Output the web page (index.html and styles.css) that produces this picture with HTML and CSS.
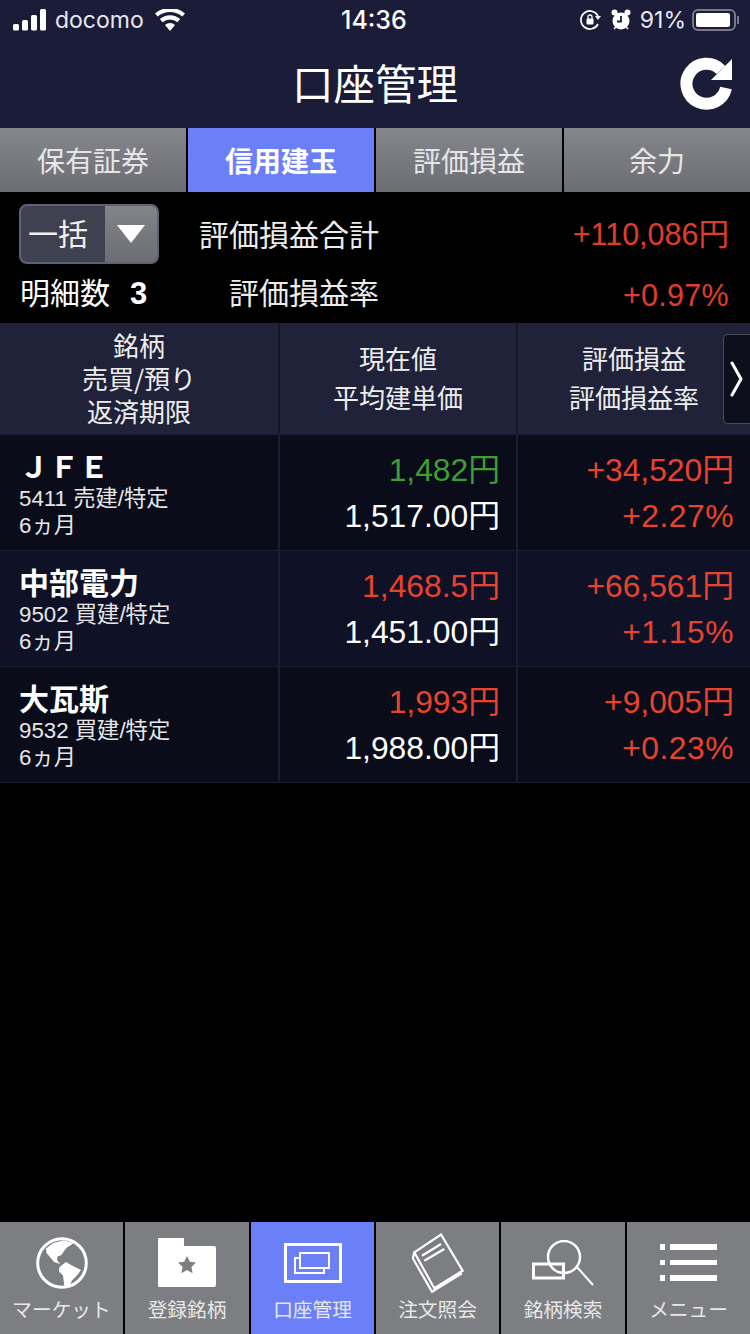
FILE: index.html
```html
<!DOCTYPE html>
<html lang="ja">
<head>
    <meta charset="UTF-8">
    <meta name="viewport" content="width=device-width, initial-scale=1.0">
    <title>口座管理</title>
    <link rel="stylesheet" href="styles.css">
</head>
<body>
    <header class="top-area">
        <div class="status-bar">
            <div class="status-left">
                <svg class="signal" width="34" height="22" viewBox="0 0 34 22"><rect x="0" y="15" width="6" height="6.500" rx="1.500"/><rect x="9" y="11" width="6" height="10.500" rx="1.500"/><rect x="18" y="6" width="6" height="15.500" rx="1.500"/><rect x="27" y="0" width="6" height="21.500" rx="1.500"/></svg>
                <span class="carrier">docomo</span>
                <svg class="wifi" width="30" height="22" viewBox="0 0 30 22"><path d="M15 22l-5-6a7.500 7.500 0 0 1 10 0z"/><path d="M7.600 13.300l-2.800-3.300a15.500 15.500 0 0 1 20.400 0l-2.800 3.300a11 11 0 0 0-14.800 0z"/><path d="M2.700 7.500L0 4.500a23 23 0 0 1 30 0l-2.700 3a19 19 0 0 0-24.600 0z"/></svg>
            </div>
            <div class="status-time">14:36</div>
            <div class="status-right">
                <svg width="22" height="22" viewBox="0 0 22 22" fill="none"><path d="M18 15a9 9 0 1 1 0-8" stroke="#fff" stroke-width="1.700"/><path d="M15 7h6l-3 4z" fill="#fff"/><rect x="6.500" y="9.500" width="7" height="6" rx="1" fill="#fff"/><path d="M8 10V8a2 2 0 0 1 4 0v2" stroke="#fff" stroke-width="1.300"/></svg>
                <svg width="20" height="22" viewBox="0 0 20 22"><circle cx="10" cy="12" r="8.500" fill="#fff"/><path d="M10 7v5.500H6" fill="none" stroke="#1a1c38" stroke-width="1.800"/><circle cx="3.500" cy="3.500" r="3" fill="#fff"/><circle cx="16.500" cy="3.500" r="3" fill="#fff"/><path d="M3 20l2-2M17 20l-2-2" stroke="#fff" stroke-width="1.500"/></svg>
                <span class="battery-pct">91%</span>
                <div class="battery"><div class="battery-fill"></div></div>
                <div class="battery-tip"></div>
            </div>
        </div>
        <div class="title-bar">
            <h1>口座管理</h1>
            <svg class="reload" width="54" height="54" viewBox="0 0 54 54"><path d="M47 31A20 20 0 1 1 42 13" fill="none" stroke="#fff" stroke-width="12"/><path d="M53 2V23H32z" fill="#fff"/></svg>
        </div>
    </header>

    <nav class="tabs">
        <div class="tab">保有証券</div>
        <div class="tab tab-active">信用建玉</div>
        <div class="tab">評価損益</div>
        <div class="tab">余力</div>
    </nav>

    <section class="summary">
        <div class="summary-row summary-row-top">
            <div class="selector">
                <span class="selector-label">一括</span>
                <span class="selector-arrow"><span class="triangle"></span></span>
            </div>
            <span class="summary-name">評価損益合計</span>
            <span class="summary-value">+110,086円</span>
        </div>
        <div class="summary-row summary-row-bottom">
            <span class="detail-count">明細数<b>3</b></span>
            <span class="summary-name">評価損益率</span>
            <span class="summary-value">+0.97%</span>
        </div>
    </section>

    <section class="table">
        <div class="table-head">
            <div class="head-cell">銘柄<br>売買/預り<br>返済期限</div>
            <div class="head-cell head-cell-two">現在値<br>平均建単価</div>
            <div class="head-cell head-cell-two">評価損益<br>評価損益率</div>
        </div>
        <div class="more-tab">
            <svg width="14" height="36" viewBox="0 0 14 36"><path d="M2 2l9 16-9 16" fill="none" stroke="#fff" stroke-width="3" stroke-linecap="round" stroke-linejoin="round"/></svg>
        </div>

        <div class="stock-row">
            <div class="stock-cell">
                <div class="stock-name">ＪＦＥ</div>
                <div class="stock-sub">5411 売建/特定</div>
                <div class="stock-sub">6ヵ月</div>
            </div>
            <div class="num-cell">
                <div class="num-top green">1,482円</div>
                <div class="num-bottom">1,517.00円</div>
            </div>
            <div class="num-cell">
                <div class="num-top red">+34,520円</div>
                <div class="num-bottom red">+2.27%</div>
            </div>
        </div>
        <div class="stock-row stock-row-alt">
            <div class="stock-cell">
                <div class="stock-name">中部電力</div>
                <div class="stock-sub">9502 買建/特定</div>
                <div class="stock-sub">6ヵ月</div>
            </div>
            <div class="num-cell">
                <div class="num-top red">1,468.5円</div>
                <div class="num-bottom">1,451.00円</div>
            </div>
            <div class="num-cell">
                <div class="num-top red">+66,561円</div>
                <div class="num-bottom red">+1.15%</div>
            </div>
        </div>
        <div class="stock-row">
            <div class="stock-cell">
                <div class="stock-name">大瓦斯</div>
                <div class="stock-sub">9532 買建/特定</div>
                <div class="stock-sub">6ヵ月</div>
            </div>
            <div class="num-cell">
                <div class="num-top red">1,993円</div>
                <div class="num-bottom">1,988.00円</div>
            </div>
            <div class="num-cell">
                <div class="num-top red">+9,005円</div>
                <div class="num-bottom red">+0.23%</div>
            </div>
        </div>
    </section>

    <footer class="bottom-nav">
        <div class="nav-item">
            <div class="nav-icon">
                <svg width="52" height="52" viewBox="0 0 52 52"><circle cx="26" cy="26" r="24.300" fill="none" stroke="#fff" stroke-width="3"/><path d="M10 11.500L17 6 27.300 3.500 38 6 31 10.500 28 14 25.500 18 21.500 19.500 21 23 24 27 18 25 13.500 19.500 10.500 16z" fill="#fff"/><path d="M23.500 30L30 25 36 28.500 45 33 41 38.500 36 43.500 33 50.500 28.500 50.500 27 38.500 23 34.500z" fill="#fff"/></svg>
            </div>
            <span>マーケット</span>
        </div>
        <div class="nav-item">
            <div class="nav-icon">
                <svg width="58" height="49" viewBox="0 0 58 49"><path d="M0 1a1 1 0 0 1 1-1h25v8h30a2 2 0 0 1 2 2v37a2 2 0 0 1-2 2H1a1 1 0 0 1-1-1z" fill="#fff"/><path d="M29 18l2.800 5.800 6.200.8-4.600 4.300 1.200 6.300-5.600-3.100-5.600 3.100 1.200-6.300-4.600-4.300 6.200-.8z" fill="#7c7e82"/></svg>
            </div>
            <span>登録銘柄</span>
        </div>
        <div class="nav-item nav-item-active">
            <div class="nav-icon">
                <svg width="58" height="40" viewBox="0 0 58 40" fill="none" stroke="#fff" stroke-width="2"><rect x="1.500" y="1.500" width="55" height="37" stroke-width="3"/><rect x="11" y="15" width="29" height="15"/><rect x="16" y="10" width="29" height="15" fill="#6b80f8"/></svg>
            </div>
            <span>口座管理</span>
        </div>
        <div class="nav-item">
            <div class="nav-icon">
                <svg width="52" height="60" viewBox="0 0 52 60" fill="none" stroke="#fff" stroke-width="2.200"><path d="M2.300 19.300L29 1.500 50.700 37.700 22.300 55.300z"/><path d="M2.300 19.300L0.800 25.300 20 58.800 49 41 47.500 38.500"/><path d="M10 22.700L29 11M12.300 27.700L32.300 16"/></svg>
            </div>
            <span>注文照会</span>
        </div>
        <div class="nav-item">
            <div class="nav-icon">
                <svg width="62" height="46" viewBox="0 0 62 46" fill="none" stroke="#fff"><circle cx="32" cy="17" r="16" stroke-width="2.500"/><rect x="1.500" y="24" width="30" height="14" stroke-width="3"/><path d="M45 27l16 18" stroke-width="2"/></svg>
            </div>
            <span>銘柄検索</span>
        </div>
        <div class="nav-item">
            <div class="nav-icon">
                <svg width="57" height="37" viewBox="0 0 57 37" fill="#fff"><rect x="0" y="0" width="5" height="6"/><rect x="10" y="0" width="47" height="6"/><rect x="0" y="16" width="5" height="5"/><rect x="10" y="16" width="47" height="5"/><rect x="0" y="31" width="5" height="6"/><rect x="10" y="31" width="47" height="6"/></svg>
            </div>
            <span>メニュー</span>
        </div>
    </footer>
</body>
</html>
```

FILE: styles.css
```css
body {
    margin: 0;
    width: 750px;
    height: 1334px;
    display: flex;
    flex-direction: column;
    overflow: hidden;
    background-color: #000;
    color: #fff;
    font-family: 'Liberation Sans', 'Noto Sans CJK JP', sans-serif;
}

.top-area {
    height: 128px;
    background-color: #1a1c38;
}

.status-bar {
    height: 40px;
    display: flex;
    align-items: center;
    justify-content: space-between;
    position: relative;
}

.status-left {
    display: flex;
    align-items: center;
    padding-left: 13px;
}

.signal {
    fill: #fff;
    margin-right: 8px;
}

.carrier {
    font-family: 'Inter', sans-serif;
    font-size: 23px;
    color: #e8e8ee;
    margin-right: 11px;
}

.wifi {
    fill: #fff;
}

.status-time {
    position: absolute;
    left: 341px;
    font-family: 'Inter', sans-serif;
    font-size: 25px;
    font-weight: 500;
}

.status-right {
    display: flex;
    align-items: center;
    padding-right: 11px;
}

.status-right svg {
    margin-right: 9px;
}

.battery-pct {
    font-family: 'Inter', sans-serif;
    font-size: 23px;
    color: #e8e8ee;
    margin-right: 6px;
}

.battery {
    width: 44px;
    height: 22px;
    box-sizing: border-box;
    border: 2px solid #77798a;
    border-radius: 6px;
    padding: 2px;
}

.battery-fill {
    width: 34px;
    height: 14px;
    background-color: #fff;
    border-radius: 2px;
}

.battery-tip {
    width: 2px;
    height: 8px;
    margin-left: 1px;
    background-color: #77798a;
}

.title-bar {
    height: 88px;
    display: flex;
    align-items: center;
    justify-content: center;
    position: relative;
}

h1 {
    margin: 0;
    font-family: 'Noto Sans CJK JP', sans-serif;
    font-size: 41.500px;
    font-weight: 400;
    line-height: 88px;
    padding-bottom: 5px;
}

.reload {
    position: absolute;
    left: 679px;
    top: 17px;
}

.tabs {
    height: 64px;
    display: grid;
    grid-template-columns: repeat(4, 186px);
    column-gap: 2px;
}

.tab {
    display: flex;
    align-items: center;
    justify-content: center;
    background: linear-gradient(#85868c, #6d6e74);
    color: #e6e6e8;
    font-family: 'Noto Sans CJK JP', sans-serif;
    font-size: 28px;
}

.tab-active {
    background: #6b80f8;
    color: #fff;
    font-weight: 700;
}

.summary {
    height: 131px;
    font-family: 'Noto Sans CJK JP', sans-serif;
    font-size: 30px;
}

.summary-row {
    display: flex;
    align-items: center;
    position: relative;
}

.summary-row-top {
    height: 60px;
    padding-top: 12px;
    padding-left: 19px;
}

.summary-row-bottom {
    height: 58px;
    padding-left: 20px;
}

.selector {
    width: 140px;
    height: 60px;
    box-sizing: border-box;
    display: flex;
    border: 2px solid #5e6272;
    border-radius: 8px;
    overflow: hidden;
    background-color: #3f4150;
}

.selector-label {
    width: 84px;
    padding-left: 7px;
    box-sizing: border-box;
    font-size: 30px;
    line-height: 52px;
    color: #f0f0f0;
}

.selector-arrow {
    flex: 1;
    display: flex;
    align-items: center;
    justify-content: center;
    background: linear-gradient(#83848a, #6d6e74);
}

.triangle {
    border-left: 14px solid transparent;
    border-right: 14px solid transparent;
    border-top: 18px solid #fff;
}

.summary-name {
    color: #ececec;
    padding-bottom: 4px;
}

.summary-row-top .summary-name {
    margin-left: 40px;
    padding-bottom: 2px;
}

.summary-row-bottom .summary-name {
    position: absolute;
    left: 229px;
}

.detail-count {
    padding-bottom: 4px;
}

.detail-count b {
    font-family: 'Liberation Sans', sans-serif;
    font-weight: 700;
    margin-left: 20px;
    font-size: 31px;
}

.summary-value {
    margin-left: auto;
    padding-right: 21px;
    color: #e03c2e;
    font-family: 'Liberation Sans', 'Noto Sans CJK JP', sans-serif;
    font-size: 30.500px;
}

.summary-row-top .summary-value {
    padding-bottom: 4px;
}

.summary-row-bottom .summary-value {
    padding-top: 4px;
    letter-spacing: 0.300px;
}

.table {
    position: relative;
}

.table-head,
.stock-row {
    display: grid;
    grid-template-columns: 278px 236px 232px;
    column-gap: 2px;
}

.table-head {
    height: 111px;
    background-color: #15172c;
    font-family: 'Noto Sans CJK JP', sans-serif;
    font-size: 26px;
    color: #eeeeee;
    text-align: center;
}

.head-cell {
    background-color: #1f2239;
    line-height: 33px;
    padding-top: 5px;
    box-sizing: border-box;
}

.head-cell-two {
    line-height: 39px;
    padding-top: 15px;
}

.more-tab {
    position: absolute;
    left: 723px;
    top: 11px;
    width: 27px;
    height: 90px;
    box-sizing: border-box;
    display: flex;
    align-items: center;
    justify-content: center;
    background-color: #0e0f1c;
    border: 1px solid #4a4c5c;
    border-right: none;
    border-radius: 5px 0 0 5px;
}

.stock-row {
    height: 116px;
    box-sizing: border-box;
    border-top: 1px solid #1b1d35;
    background-color: #1b1d35;
}

.stock-row:last-child {
    height: 117px;
    border-bottom: 1px solid #1b1d35;
}

.stock-cell,
.num-cell {
    background-color: #0a0c1a;
}

.stock-row-alt .stock-cell,
.stock-row-alt .num-cell {
    background-color: #0f1226;
}

.stock-cell {
    padding: 10px 0 0 19px;
    box-sizing: border-box;
}

.stock-name {
    font-family: 'Noto Sans CJK JP', sans-serif;
    font-size: 30px;
    font-weight: 700;
    line-height: 40px;
}

.stock-sub {
    font-family: 'Liberation Sans', 'Noto Sans CJK JP', sans-serif;
    font-size: 22.300px;
    line-height: 27px;
    color: #e6e6e6;
}

.num-cell {
    text-align: right;
    padding: 12px 16px 0 0;
    box-sizing: border-box;
    font-family: 'Liberation Sans', 'Noto Sans CJK JP', sans-serif;
    font-size: 31.800px;
    line-height: 46px;
}

.num-bottom {
    color: #fff;
}

.red,
.num-bottom.red {
    color: #e8432f;
}

.num-bottom.red {
    letter-spacing: 0.500px;
}

.green {
    color: #3f9e33;
}

.bottom-nav {
    margin-top: auto;
    height: 112px;
    display: grid;
    grid-template-columns: 123px 124px 123px 123px 124px 123px;
    column-gap: 2px;
}

.nav-item {
    display: flex;
    flex-direction: column;
    align-items: center;
    box-sizing: border-box;
    height: 112px;
    padding-top: 8px;
    background-color: #7c7e82;
}

.nav-icon {
    height: 65px;
    display: flex;
    align-items: center;
    justify-content: center;
}

.nav-item span {
    font-family: 'Noto Sans CJK JP', sans-serif;
    font-size: 19.700px;
    line-height: 28px;
    color: #e8e8e8;
}

.nav-item-active {
    background-color: #6b80f8;
}
```
